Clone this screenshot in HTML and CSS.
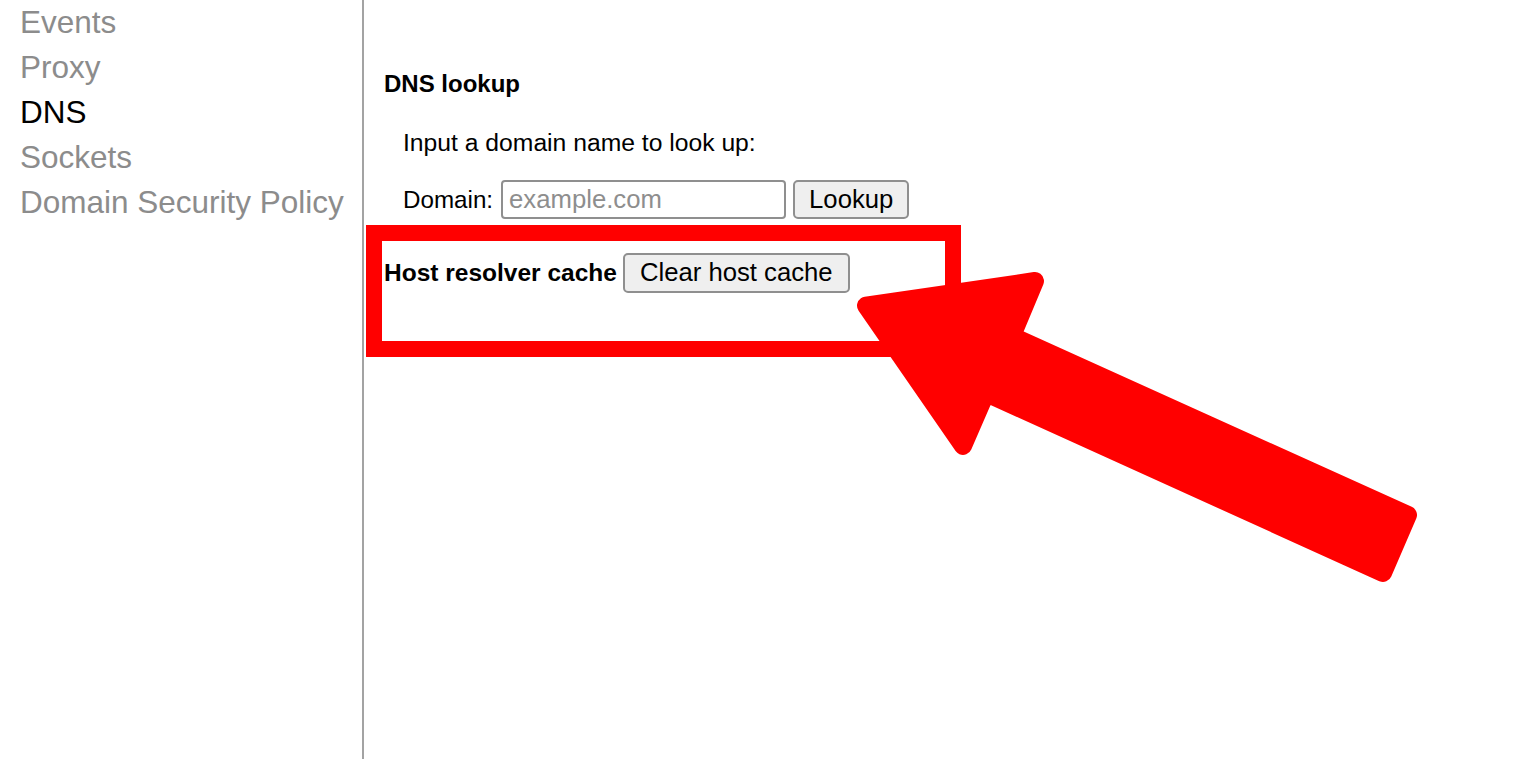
FILE: index.html
```html
<!DOCTYPE html>
<html lang="en">
<head>
<meta charset="utf-8">
<title>net-internals DNS</title>
<link rel="stylesheet" href="styles.css">
</head>
<body>
<div class="page">
  <nav class="sidebar">
    <ul class="nav-list">
      <li class="nav-item">Events</li>
      <li class="nav-item">Proxy</li>
      <li class="nav-item active">DNS</li>
      <li class="nav-item">Sockets</li>
      <li class="nav-item">Domain Security Policy</li>
    </ul>
  </nav>
  <main class="main">
    <h2 class="section-title">DNS lookup</h2>
    <p class="prompt">Input a domain name to look up:</p>
    <div class="domain-row">
      <label class="domain-label" for="domain">Domain:</label>
      <input id="domain" class="domain-input" type="text" placeholder="example.com">
      <button class="btn">Lookup</button>
    </div>
    <div class="host-row">
      <h3 class="host-title">Host resolver cache</h3>
      <button class="btn btn-tall">Clear host cache</button>
    </div>
  </main>
</div>
<div class="highlight-box"></div>
<svg class="arrow" width="1536" height="759" viewBox="0 0 1536 759" xmlns="http://www.w3.org/2000/svg">
  <polygon points="866,305.6 1035,281 1012,336 1408,515 1383,573 986,393 963,446" fill="#ff0000" stroke="#ff0000" stroke-width="18" stroke-linejoin="round"/>
</svg>
</body>
</html>
```
FILE: styles.css
```css
html, body {
  margin: 0;
  padding: 0;
}
body {
  width: 1536px;
  height: 759px;
  overflow: hidden;
  position: relative;
  background: #ffffff;
  font-family: "Liberation Sans", Arial, Helvetica, sans-serif;
  color: #000000;
}
.page {
  display: flex;
  height: 759px;
}
.sidebar {
  width: 342px;
  padding-left: 20px;
  border-right: 2px solid #a3a3a3;
  flex-shrink: 0;
}
.nav-list {
  list-style: none;
  margin: 0;
  padding: 0;
}
.nav-item {
  font-size: 31.5px;
  line-height: 45px;
  color: #8c8c8c;
  white-space: nowrap;
}
.nav-item.active {
  color: #000000;
}
.main {
  flex: 1;
  padding: 69px 0 0 20px;
}
.section-title {
  margin: 0;
  font-size: 24px;
  line-height: 30px;
  font-weight: bold;
}
.prompt {
  margin: 29px 0 0 19px;
  font-size: 24.7px;
  line-height: 30px;
}
.domain-row {
  margin: 22px 0 0 19px;
  display: flex;
  align-items: center;
  height: 39px;
}
.domain-label {
  font-size: 24.2px;
  line-height: 30px;
  margin-right: 8px;
}
.domain-input {
  box-sizing: border-box;
  width: 285px;
  height: 39px;
  margin: 0;
  padding: 0 6px;
  border: 2px solid #8f8f8f;
  border-radius: 4px;
  font-family: "Liberation Sans", Arial, Helvetica, sans-serif;
  font-size: 25.7px;
  color: #000;
  background: #fff;
  outline: none;
}
.domain-input::placeholder {
  color: #8e8e8e;
}
.btn {
  box-sizing: border-box;
  height: 39px;
  margin: 0 0 0 7px;
  padding: 0 14px;
  border: 2px solid #8f8f8f;
  border-radius: 5px;
  background: #efefef;
  font-family: "Liberation Sans", Arial, Helvetica, sans-serif;
  font-size: 25.7px;
  color: #000;
  line-height: 1;
}
.btn-tall {
  height: 40px;
  margin-left: 6px;
  padding: 0 15px;
}
.host-row {
  margin-top: 34px;
  display: flex;
  align-items: center;
  height: 40px;
}
.host-title {
  margin: 0;
  font-size: 24.5px;
  line-height: 30px;
  font-weight: bold;
}
.highlight-box {
  position: absolute;
  left: 366px;
  top: 225px;
  width: 595px;
  height: 132px;
  box-sizing: border-box;
  border: 16px solid #ff0000;
  pointer-events: none;
}
.arrow {
  position: absolute;
  left: 0;
  top: 0;
  pointer-events: none;
}
```
